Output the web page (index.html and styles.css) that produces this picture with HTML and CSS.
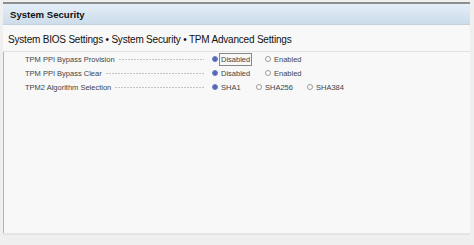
FILE: index.html
```html
<!DOCTYPE html>
<html lang="en">

<head>
  <meta charset="UTF-8">
  <title>System Security</title>
  <link rel="stylesheet" href="styles.css">
</head>

<body>
  <div class="panel">
    <div class="hd">System Security</div>
    <div class="crumb">System BIOS Settings &bull; System Security &bull; TPM Advanced Settings</div>
    <div class="bd">
      <ul class="rows">
        <li class="row">
          <span class="name"><span class="lbl">TPM PPI Bypass Provision</span><span class="dots"></span></span>
          <span class="opts">
            <span class="opt w1"><i class="radio on"></i><span class="focus">Disabled</span></span>
            <span class="opt"><i class="radio"></i>Enabled</span>
          </span>
        </li>
        <li class="row">
          <span class="name"><span class="lbl">TPM PPI Bypass Clear</span><span class="dots"></span></span>
          <span class="opts">
            <span class="opt w1"><i class="radio on"></i>Disabled</span>
            <span class="opt"><i class="radio"></i>Enabled</span>
          </span>
        </li>
        <li class="row">
          <span class="name"><span class="lbl">TPM2 Algorithm Selection</span><span class="dots"></span></span>
          <span class="opts">
            <span class="opt w2"><i class="radio on"></i>SHA1</span>
            <span class="opt w3"><i class="radio"></i>SHA256</span>
            <span class="opt"><i class="radio"></i>SHA384</span>
          </span>
        </li>
      </ul>
    </div>
  </div>
</body>

</html>
```

FILE: styles.css
```css
* {
  margin: 0;
  padding: 0;
}

ul {
  list-style: none;
}

html,
body {
  width: 100%;
  height: 100%;
}

body {
  background: #efefef;
  font-family: "Liberation Sans", Arial, sans-serif;
  color: #333;
}

.panel {
  margin: 2px 4px 0 3px;
  border-top: 2px solid #8e8e8e;
  background: #f8f8f8;
  height: 229px;
  display: flex;
  flex-direction: column;
}

.hd {
  height: 19px;
  line-height: 19px;
  padding: 1px 0 0 7px;
  font-size: 9.6px;
  font-weight: bold;
  color: #111;
  background: linear-gradient(#e4eff8, #ccdcea);
  border-bottom: 1px solid #c4d2de;
}

.crumb {
  height: 26px;
  line-height: 29px;
  padding-left: 5px;
  font-size: 10px;
  letter-spacing: -0.2px;
  color: #111;
  border-bottom: 1px solid #e2e2e2;
}

.bd {
  flex: 1;
  border-left: 1px solid #b4b4b4;
  box-shadow: 0 2px 0 #e4e4e4;
}

.rows {
  padding-top: 0;
}

.row {
  display: flex;
  align-items: center;
  height: 14px;
  font-size: 7.5px;
  color: #444;
}

.name {
  display: flex;
  align-items: center;
  width: 208px;
}

.lbl {
  padding-left: 21px;
  white-space: nowrap;
}

.dots {
  flex: 1;
  height: 1px;
  margin: 1px 8px 0 4px;
  background: repeating-linear-gradient(90deg, #c4c4c4 0 2px, transparent 2px 3px);
}

.opts {
  display: flex;
  align-items: center;
}

.opt {
  display: flex;
  align-items: center;
}

.w1 {
  width: 53px;
}

.w2 {
  width: 44px;
}

.w3 {
  width: 51px;
}

.radio {
  display: inline-block;
  width: 4px;
  height: 4px;
  border: 1px solid #999;
  border-radius: 50%;
  margin-right: 3px;
  background: #fff;
}

.radio.on {
  background: #5566b4;
  border-color: #7080c0;
}

.focus {
  border: 1px solid #888;
  padding: 1px 1px;
  margin-left: -2px;
}
```
